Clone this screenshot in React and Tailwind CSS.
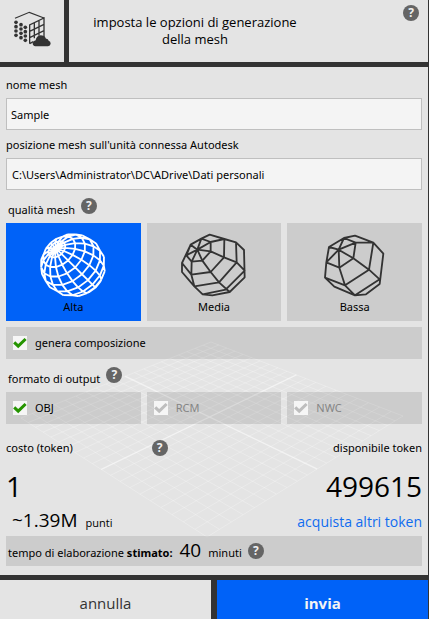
import { useState } from 'react'

// wireframe sphere, pole tilted towards the upper left
function spherePath() {
  const n = [-0.525, -0.535, 0.662]
  const len = Math.hypot(n[0], n[1])
  const u = [-n[1] / len, n[0] / len, 0]
  const v = [-n[2] * u[1], n[2] * u[0], n[0] * u[1] - n[1] * u[0]]
  const meridians = 16
  const bands = 10
  const step = Math.PI / bands

  const point = (i, j) => {
    const t = i * step
    const p = (j * 2 * Math.PI) / meridians
    const [x, y, z] = [0, 1, 2].map(
      k => Math.cos(t) * n[k] + Math.sin(t) * (Math.cos(p) * u[k] + Math.sin(p) * v[k])
    )
    return { x: 219 + 97 * x, y: 142 + 94 * y, z }
  }

  let d = ''
  const segment = (a, b) => {
    if (a.z > -0.15 && b.z > -0.15) {
      d += `M${a.x.toFixed(1)} ${a.y.toFixed(1)}L${b.x.toFixed(1)} ${b.y.toFixed(1)}`
    }
  }
  for (let i = 0; i < bands; i++) {
    for (let j = 0; j < meridians; j++) {
      segment(point(i, j), point(i + 1, j))
      if (i > 0) segment(point(i, j), point(i, j + 1))
    }
  }
  return d
}

// floor grid in perspective, corners: top, right, bottom, left
function gridPaths(cells) {
  const [[x0, y0], [x1, y1], [x2, y2], [x3, y3]] = [[192, 2], [384, 76], [188, 197], [2, 78]]
  const dx1 = x1 - x2, dx2 = x3 - x2, sx = x0 - x1 + x2 - x3
  const dy1 = y1 - y2, dy2 = y3 - y2, sy = y0 - y1 + y2 - y3
  const det = dx1 * dy2 - dx2 * dy1
  const g = (sx * dy2 - dx2 * sy) / det
  const h = (dx1 * sy - sx * dy1) / det
  const at = (s, t) => {
    const w = g * s + h * t + 1
    const x = ((x1 - x0 + g * x1) * s + (x3 - x0 + h * x3) * t + x0) / w
    const y = ((y1 - y0 + g * y1) * s + (y3 - y0 + h * y3) * t + y0) / w
    return `${x.toFixed(1)} ${y.toFixed(1)}`
  }
  const line = k => `M${at(k, 0)}L${at(k, 1)}M${at(0, k)}L${at(1, k)}`
  let thin = ''
  for (let i = 0; i <= cells; i++) thin += line(i / cells)
  return { thin, thick: line(0.5) }
}

const grid = gridPaths(20)

const qualities = [
  { id: 'alta', label: 'Alta', viewBox: '120 45 201 192', d: spherePath() },
  {
    id: 'media',
    label: 'Media',
    viewBox: '113 45 201 192',
    d: 'M177 62L202 50L246 63L281 73L305 96L307 178L262 222L210 232L181 229L156 205L119 162L119 135L145 80Z M177 62L205 72L205 100L180 128L148 131L132 112L145 80 M165 95L177 62M165 95L205 72M165 95L205 100M165 95L180 128M165 95L148 131M165 95L132 112M165 95L145 80 M205 72L246 63L245 118L205 162L147 170L119 135 M205 100L245 118L283 133L307 158L250 215L181 229 M180 128L205 162L230 193L262 222 M148 131L147 170L156 205L230 193L283 133L281 73'
  },
  {
    id: 'bassa',
    label: 'Bassa',
    viewBox: '111 45 201 192',
    d: 'M135 87L180 60L213 53L268 74L298 107L287 198L246 229L213 232L151 206L123 179L127 133Z M164 95L135 87M164 95L180 60M164 95L215 74M164 95L208 121M164 95L166 149M164 95L127 133 M180 60L215 74L208 121L166 149L127 133 M215 74L268 74L255 155L208 121 M255 155L183 202L166 149 M183 202L123 179 M255 155L287 184L213 232L183 202'
  }
]

function Help({ title }) {
  return (
    <button
      type="button"
      aria-label={title}
      className="flex h-4 w-4 shrink-0 items-center justify-center rounded-full bg-[#656565] text-[12px] leading-4 font-bold text-[#f0f0f0]"
    >
      ?
    </button>
  )
}

function CheckRow({ label, disabled = false }) {
  const [checked, setChecked] = useState(true)
  return (
    <label className="flex h-8 items-center gap-2 bg-black/10 px-[7px]">
      <span className="grid h-[14px] w-[14px]">
        <input
          type="checkbox"
          checked={checked}
          disabled={disabled}
          onChange={() => setChecked(!checked)}
          className="col-start-1 row-start-1 h-[14px] w-[14px] appearance-none bg-[#f6f6f6]"
        />
        {checked && (
          <svg
            viewBox="0 0 14 14"
            className={`pointer-events-none col-start-1 row-start-1 ${disabled ? 'text-[#bebebe]' : 'text-[#259400]'}`}
          >
            <path d="M1.2 6.4L5.2 10.2L12.6 3" fill="none" stroke="currentColor" strokeWidth="3" />
          </svg>
        )}
      </span>
      <span className={disabled ? 'text-[#858585]' : ''}>{label}</span>
    </label>
  )
}

function MeshLogo() {
  const columns = [[46, 68], [61, 75], [74, 83]]
  return (
    <svg viewBox="40 34 111 108" className="h-9 w-[37px] text-[#333]" aria-hidden="true">
      <path d="M43 56L86 38L130 55" fill="none" stroke="currentColor" strokeWidth="3.5" />
      {columns.map(([x, y]) =>
        [0, 1, 2, 3].map(i => <circle key={`${x}-${i}`} cx={x} cy={y + i * 13} r="5.5" fill="currentColor" />)
      )}
      <path
        d="M87 132V76L130 55V112 M101 69V116 M115 62V108 M87 95L130 74 M87 114L130 93 M87 132L98 126"
        fill="none"
        stroke="currentColor"
        strokeWidth="4"
      />
      <path
        d="M104 140Q96 139 96 131Q97 123 105 122Q107 108 120 107Q131 107 136 117Q142 116 144 123Q150 125 150 132Q149 139 142 140Z"
        fill="currentColor"
      />
    </svg>
  )
}

export default function App() {
  const [name, setName] = useState('Sample')
  const [folder, setFolder] = useState('C:\\Users\\Administrator\\DC\\ADrive\\Dati personali')
  const [quality, setQuality] = useState('alta')

  return (
    <div className="flex min-h-screen flex-col border-r border-[#333] bg-[#e4e4e4] font-['Noto_Sans','Open_Sans',sans-serif] text-[11px] leading-4 text-black">
      <header className="flex h-[67px] border-b-[5px] border-[#333]">
        <div className="flex w-[69px] shrink-0 justify-center border-r-[5px] border-[#333] pt-[11px]">
          <MeshLogo />
        </div>
        <h1 className="w-[252px] pt-[14px] text-center font-['Open_Sans',sans-serif] text-[13px] leading-[17px]">
          imposta le opzioni di generazione
          <br />
          della mesh
        </h1>
        <div className="ml-auto pt-[5px] pr-[9px]">
          <Help title="Guida" />
        </div>
      </header>

      <main className="relative isolate flex flex-1 flex-col px-[6px] pt-[10px]">
        <svg
          viewBox="0 0 386 199"
          className="pointer-events-none absolute top-[273px] left-[19px] -z-10 w-[386px] text-white"
          aria-hidden="true"
        >
          <path d={grid.thin} fill="none" stroke="currentColor" strokeOpacity="0.25" />
          <path d={grid.thick} fill="none" stroke="currentColor" strokeOpacity="0.4" strokeWidth="1.5" />
        </svg>

        <label htmlFor="mesh-name">nome mesh</label>
        <input
          id="mesh-name"
          value={name}
          onChange={e => setName(e.target.value)}
          className="mt-[5px] h-8 w-full border border-[#bfbfbf] bg-[#f4f4f4] px-1 outline-none"
        />
        <label htmlFor="mesh-folder" className="mt-[7px]">posizione mesh sull'unità connessa Autodesk</label>
        <input
          id="mesh-folder"
          value={folder}
          onChange={e => setFolder(e.target.value)}
          className="mt-[5px] h-8 w-full border border-[#bfbfbf] bg-[#f4f4f4] px-[5px] outline-none"
        />

        <fieldset className="mt-2">
          <div className="flex gap-[6px] pl-[2px]">
            <legend className="pt-1">qualità mesh</legend>
            <Help title="Guida qualità mesh" />
          </div>
          <div className="mt-[5px] grid grid-cols-3 gap-[6px]">
            {qualities.map(q => (
              <label
                key={q.id}
                className={`flex h-[98px] flex-col items-center pt-[10px] ${quality === q.id ? 'bg-[#0062f8]' : 'bg-black/10'}`}
              >
                <input
                  type="radio"
                  name="quality"
                  checked={quality === q.id}
                  onChange={() => setQuality(q.id)}
                  className="sr-only"
                />
                <svg
                  viewBox={q.viewBox}
                  className={`h-16 w-[67px] ${quality === q.id ? 'text-white' : 'text-[#333]'}`}
                  aria-hidden="true"
                >
                  <path d={q.d} fill="none" stroke="currentColor" strokeWidth="5.5" strokeLinejoin="round" />
                </svg>
                <span className="mt-[2px]">{q.label}</span>
              </label>
            ))}
          </div>
        </fieldset>

        <div className="mt-[6px]">
          <CheckRow label="genera composizione" />
        </div>

        <fieldset className="mt-2">
          <div className="flex gap-[6px] pl-[2px]">
            <legend className="pt-1">formato di output</legend>
            <Help title="Guida formato di output" />
          </div>
          <div className="mt-[5px] grid grid-cols-3 gap-[6px]">
            <CheckRow label="OBJ" />
            <CheckRow label="RCM" disabled />
            <CheckRow label="NWC" disabled />
          </div>
        </fieldset>

        <section className="mt-4 font-['Open_Sans',sans-serif]">
          <div className="grid grid-cols-3 font-['Noto_Sans',sans-serif]">
            <span>costo (token)</span>
            <span className="pl-[7px]"><Help title="Guida costo" /></span>
            <span className="text-right">disponibile token</span>
          </div>
          <div className="mt-3 flex justify-between text-[28px] leading-9">
            <span>1</span>
            <span>499615</span>
          </div>
          <div className="mt-1 flex items-baseline justify-between">
            <p className="pl-[6px]">
              <span className="mr-2 text-[19px] leading-6">~1.39M</span>
              punti
            </p>
            <a href="#" className="text-[14px] text-[#0f6cf0]">acquista altri token</a>
          </div>
        </section>

        <div className="mt-1 mb-2 flex h-[30px] items-center bg-black/10 pl-[2px]">
          <p>
            tempo di elaborazione <strong>stimato:</strong>
            <span className="mx-[7px] font-['Open_Sans',sans-serif] text-[19px]">40</span>
            minuti
          </p>
          <span className="ml-[6px]"><Help title="Guida tempo stimato" /></span>
        </div>
      </main>

      <footer className="grid grid-cols-2 gap-[6px] border-t-[5px] border-[#333] bg-[#333] font-['Open_Sans',sans-serif] text-[15px]">
        <button type="button" className="h-[39px] bg-[#e4e4e4] pt-[6px] leading-5 text-[#333]">annulla</button>
        <button type="button" className="h-[39px] bg-[#0062f8] pt-[6px] leading-5 font-bold text-[#f4f4f4]">invia</button>
      </footer>
    </div>
  )
}
